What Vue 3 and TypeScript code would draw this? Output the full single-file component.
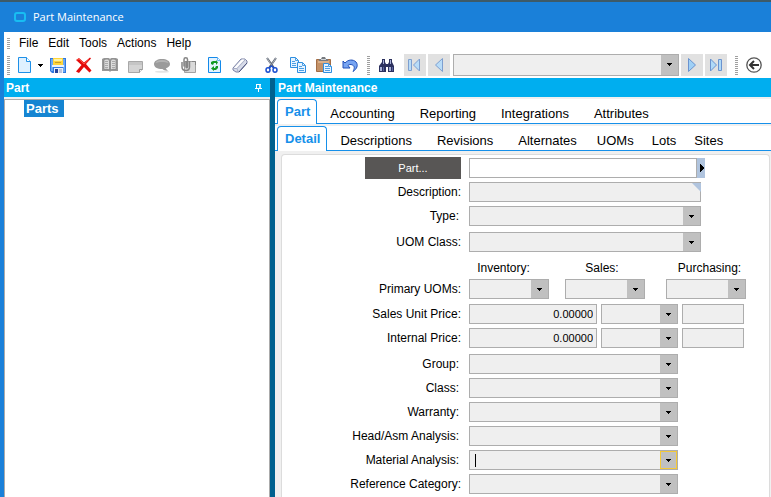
<script setup lang="ts">
import { ref } from 'vue'

interface Tab {
  name: string
  short?: boolean
}

interface Lookup {
  id: string
  label: string
  inset: boolean
  active?: boolean
}

const menus: string[] = ['File', 'Edit', 'Tools', 'Actions', 'Help']

const mainTabs: Tab[] = [
  { name: 'Part' },
  { name: 'Accounting' },
  { name: 'Reporting' },
  { name: 'Integrations' },
  { name: 'Attributes' },
]

const detailTabs: Tab[] = [
  { name: 'Detail' },
  { name: 'Descriptions' },
  { name: 'Revisions' },
  { name: 'Alternates' },
  { name: 'UOMs', short: true },
  { name: 'Lots', short: true },
  { name: 'Sites', short: true },
]

const uoms: string[] = ['Inventory', 'Sales', 'Purchasing']

const lookups: Lookup[] = [
  { id: 'group', label: 'Group:', inset: true },
  { id: 'class', label: 'Class:', inset: true },
  { id: 'warranty', label: 'Warranty:', inset: true },
  { id: 'head', label: 'Head/Asm Analysis:', inset: true },
  { id: 'material', label: 'Material Analysis:', inset: true, active: true },
  { id: 'reference', label: 'Reference Category:', inset: false },
]

const mainTab = ref('Part')
const detailTab = ref('Detail')
const prices = ref([
  { id: 'sales-price', label: 'Sales Unit Price:', value: '0.00000' },
  { id: 'internal-price', label: 'Internal Price:', value: '0.00000' },
])
</script>

<template>
  <div class="window">
    <header class="titlebar">
      <span class="app-icon"></span>
      <span>Part Maintenance</span>
    </header>

    <div class="client">
      <nav class="menubar">
        <span class="grip"></span>
        <button v-for="m in menus" :key="m" type="button">{{ m }}</button>
      </nav>

      <div class="toolbar">
        <span class="grip"></span>
        <div class="tools">
          <div class="split">
            <button type="button" aria-label="New">
              <svg viewBox="0 0 16 16"><path d="M2.5.5h8l4 4v11h-12z" fill="#dff1ff" stroke="#1e90e8" /><path d="M10.500.5v4h4" fill="#fff" stroke="#1e90e8" /></svg>
            </button>
            <button type="button" class="more" aria-label="New options">
              <svg viewBox="0 0 8 16"><path d="M2 7h5v1H6v1H5v1H4V9H3V8H2z" fill="#000" /></svg>
            </button>
          </div>
          <button type="button" aria-label="Save">
            <svg viewBox="0 0 16 16"><path d="M0 1h16v15H2l-2-2z" fill="#2f78e0" /><path d="M1 2h2v12H1zM13 2h2v13h-2z" fill="#6ba9f5" /><path d="M3 1h10v7H3z" fill="#ffd53a" /><path d="M4 2h8v2H4z" fill="#fff2a0" /><path d="M5 5h6v1H5z" fill="#c79e2c" /><path d="M2 8h12v2H2z" fill="#e8f2ff" /><path d="M4 11h9v5H4z" fill="#eef0f6" /><path d="M5 12h3v4H5z" fill="#24449c" /><path d="M9 12h3v4H9z" fill="#b9c4de" /></svg>
          </button>
          <button type="button" aria-label="Delete">
            <svg viewBox="0 0 16 16"><path d="M0 3l3-2 5 4.500 6-5 1 1-5 5.500 5.500 6.500-2 2L8 10l-5 6-3-1.500L5.500 8z" fill="#e30b0b" /><path d="M1 3l2-1 5 5 5-4.500" fill="none" stroke="#ff4b3e" /></svg>
          </button>
          <button type="button" aria-label="Book">
            <svg viewBox="0 0 16 16"><path d="M0 2l2-1h5l1 1 1-1h5l2 1v12H9l-1 1-1-1H0z" fill="#999" /><path d="M2 2.500q4-1.500 5.500 1V13Q5 11.500 2 12.500zM14 2.500q-4-1.500-5.500 1V13q2.500-1.500 5.500-.5z" fill="#dcdcdc" stroke="#808080" stroke-width=".7" /><path d="M3 4.500h3M3 6.500h3M3 8.500h3M3 10.500h3M10 4.500h3M10 6.500h3M10 8.500h3M10 10.500h3" stroke="#aaa" /></svg>
          </button>
          <button type="button" aria-label="Note">
            <svg viewBox="0 0 16 16"><path d="M.5 4.500h14v8l-3 3H.5z" fill="#d4d4d4" stroke="#a8a8a8" /><path d="M1 5h13v3H1z" fill="#c5c5c5" /><path d="M14.500 12.500h-3v3" fill="#f3f3f3" stroke="#999" /></svg>
          </button>
          <button type="button" aria-label="Comment">
            <svg viewBox="0 0 16 16"><ellipse cx="8" cy="14.800" rx="7" ry="1" fill="#e4e4e4" /><path d="M8 2c4.500 0 8 2 8 5 0 2-1.500 3.500-4 4.300.2 1 .8 1.700 2 2.300-2.500.2-4.300-.5-5.500-1.600C3 12 0 10 0 7s3.500-5 8-5z" fill="#9b9b9b" /><path d="M8 3c3.500 0 6 1 6.500 3-3-1.500-10-1.500-13 0C2 4 4.500 3 8 3z" fill="#b4b4b4" /></svg>
          </button>
          <button type="button" aria-label="Attachments">
            <svg viewBox="0 0 16 16"><path d="M4.500 4.500h11v11h-11z" fill="#dadada" stroke="#a2a2a2" /><path d="M12 4.500h3.500V8" fill="none" stroke="#858585" /><path d="M9.500 4v6c0 3-1.500 3.500-3.500 3.500s-4-.5-4-3.500V5M4 9.500V2.500C4 .2 7.500.2 7.500 2.500v7c0 1.500-1.500 1.500-1.500 0V4" fill="none" stroke="#858585" stroke-width="1.500" /></svg>
          </button>
          <button type="button" aria-label="Refresh">
            <svg viewBox="0 0 16 16"><path d="M2.500.5h9l3 3v12h-12z" fill="#e3f3ff" stroke="#1389ea" /><path d="M11.500.5v3h3" fill="#fff" stroke="#6ab5f2" /><path d="M5 7V5l2-1h3V3l2 2.500L10 8V6H8L7 8zM12 9v2l-2 2H8v1l-3-2.500L8 9v2h1l1-2z" fill="#129a25" /></svg>
          </button>
          <button type="button" aria-label="Clear">
            <svg viewBox="0 0 16 16"><path d="M1 11l8-9h4l2 2v2l-8 9H4l-3-2z" fill="#d8dce9" stroke="#7a81a4" stroke-linejoin="round" /><path d="M2 11l8-8.500h2.500L4.500 11z" fill="#fff" /><path d="M1.500 11.500h3.500L13.500 2.500M5 11.500l1 3" fill="none" stroke="#aab0c8" /><path d="M7 15l8-9" stroke="#4d547d" /></svg>
          </button>
        </div>

        <div class="tools edit-tools">
          <button type="button" aria-label="Cut">
            <svg viewBox="0 0 16 16"><path d="M3 1l7 10M12 1L5 11" stroke="#555c68" stroke-width="2" /><path d="M3 1l5 8M12 1L8 7" stroke="#c6cbd4" stroke-width=".8" /><ellipse cx="4" cy="13" rx="2" ry="2.200" fill="none" stroke="#1b4fd0" stroke-width="1.500" /><ellipse cx="11" cy="13" rx="2" ry="2.200" fill="none" stroke="#1b4fd0" stroke-width="1.500" /><path d="M5 11l2.500-2L10 11" fill="none" stroke="#1b4fd0" stroke-width="1.500" /></svg>
          </button>
          <button type="button" aria-label="Copy">
            <svg viewBox="0 0 16 16"><path d="M.5.5h5l3 3v7h-8z" fill="#e8f4ff" stroke="#2f8fe0" /><path d="M5.500.5v3h3M2 4.500h3M2 6.500h4M2 8.500h4" fill="none" stroke="#4c9fe5" /><path d="M7.500 5.500h5l3 3v7h-8z" fill="#e8f4ff" stroke="#2f8fe0" /><path d="M12.500 5.500v3h3M9 9.500h3M9 11.500h5M9 13.500h5" fill="none" stroke="#4c9fe5" /></svg>
          </button>
          <button type="button" aria-label="Paste">
            <svg viewBox="0 0 16 16"><path d="M.5 2.500h14v12H.5z" fill="#c39167" stroke="#a36d45" /><path d="M2 4h11v2H2z" fill="#dbb08a" /><path d="M3 2h2l1-2h3l1 2h2v2H3z" fill="#777b80" /><path d="M5 2.500h5" stroke="#d0d3d6" /><path d="M7.500 6.500h5l3 3v6h-8z" fill="#e8f4ff" stroke="#2f8fe0" /><path d="M12.500 6.500v3h3M9 9.500h3M9 11.500h5M9 13.500h5" fill="none" stroke="#4c9fe5" /></svg>
          </button>
          <button type="button" aria-label="Undo">
            <svg viewBox="0 0 16 16"><path d="M1 4l2 2c3-3.500 8-4 11-1 2.500 3 1 7-3 9.500 1.500-3 2-5-.5-6.500C8.500 7 7 7.500 6 8.500L8 11H1z" fill="#78a5f2" stroke="#2451b8" stroke-linejoin="round" /></svg>
          </button>
        </div>

        <span class="grip"></span>
        <button type="button" class="find" aria-label="Find">
          <svg viewBox="0 0 16 16"><path d="M3 2h3v3l1 2h2l1-2V2h3v3l2 4v6H9v-5H7v5H0V9l3-4z" fill="#2c315f" /><path d="M1 10h2v4H1zM10 10h2v4h-2zM4 3h1v4H4zM11 3h1v4h-1z" fill="#a7b0d8" /><path d="M4 10h1v4H4zM13 10h1v4h-1z" fill="#5964a0" /></svg>
        </button>

        <div class="record-nav">
          <button type="button" class="nav" aria-label="First">
            <svg viewBox="0 0 22 22"><path d="M4.500 5.500h3v11h-3zM15.500 5v12l-6-6z" fill="#b8dcf8" stroke="#7d9fd0" stroke-linejoin="round" /></svg>
          </button>
          <button type="button" class="nav" aria-label="Previous">
            <svg viewBox="0 0 22 22"><path d="M14.500 4.500v13l-7-6.500z" fill="#b8dcf8" stroke="#7d9fd0" stroke-linejoin="round" /></svg>
          </button>
          <span class="combo record"><select aria-label="Record"></select></span>
          <button type="button" class="nav" aria-label="Next">
            <svg viewBox="0 0 22 22"><path d="M7.500 4.500v13l7-6.500z" fill="#9fd0f6" stroke="#6a93cf" stroke-linejoin="round" /></svg>
          </button>
          <button type="button" class="nav" aria-label="Last">
            <svg viewBox="0 0 22 22"><path d="M5.500 5v12l6-6zM13.500 5.500h3v11h-3z" fill="#b0daf8" stroke="#6a93cf" stroke-linejoin="round" /></svg>
          </button>
        </div>

        <span class="grip"></span>
        <button type="button" class="back" aria-label="Back">
          <svg viewBox="0 0 16 16"><circle cx="8" cy="8" r="7.200" fill="#fff" stroke="#555" stroke-width="1.300" /><path d="M13 8H4M8 4L4 8l4 4" fill="none" stroke="#333" stroke-width="2" /></svg>
        </button>
      </div>

      <div class="workspace">
        <aside class="tree-pane">
          <h2 class="pane-title">
            <span>Part</span>
            <button type="button" class="pin" aria-label="Pin">
              <svg viewBox="0 0 8 10"><path d="M2.500 1v4.500M6 1v4.500M2 1.500h5M1 5.500h7M4.500 6v3" fill="none" stroke="#fff" /><path d="M5.500 1h1v4h-1z" fill="#fff" /></svg>
            </button>
          </h2>
          <ul class="tree">
            <li><a href="#parts">Parts</a></li>
          </ul>
        </aside>

        <main class="editor">
          <h2 class="pane-title">Part Maintenance</h2>
          <div class="tabs" role="tablist">
            <button v-for="t in mainTabs" :key="t.name" type="button" role="tab" :class="{ current: mainTab === t.name }" :aria-selected="mainTab === t.name" @click="mainTab = t.name">{{ t.name }}</button>
          </div>
          <div class="tabs" role="tablist">
            <button v-for="t in detailTabs" :key="t.name" type="button" role="tab" :class="{ current: detailTab === t.name, short: t.short }" :aria-selected="detailTab === t.name" @click="detailTab = t.name">{{ t.name }}</button>
          </div>

          <form class="sheet" @submit.prevent>
            <section>
              <div class="row">
                <button type="button" class="part-button">Part...</button>
                <div class="part-field">
                  <input class="box editable" type="text" aria-label="Part" />
                  <button type="button" class="flyout" aria-label="Open menu">
                    <svg viewBox="0 0 8 20"><path d="M3 6h1v1h1v1h1v1h1v2H6v1H5v1H4v1H3z" fill="#000" /></svg>
                  </button>
                </div>
              </div>
              <div class="row">
                <label for="description">Description:</label>
                <div class="wide noted"><input id="description" class="box" type="text" /></div>
              </div>
              <div class="row">
                <label class="inset" for="type">Type:</label>
                <span class="combo wide"><select id="type"></select></span>
              </div>
            </section>

            <section>
              <div class="row">
                <label for="uom-class">UOM Class:</label>
                <span class="combo wide"><select id="uom-class"></select></span>
              </div>
            </section>

            <section>
              <div class="uom-heads">
                <label v-for="u in uoms" :key="u" :for="'uom-' + u">{{ u }}:</label>
              </div>
              <div class="row">
                <span class="caption">Primary UOMs:</span>
                <div class="uom-fields">
                  <span v-for="u in uoms" :key="u" class="combo"><select :id="'uom-' + u"></select></span>
                </div>
              </div>
            </section>

            <section class="prices">
              <div v-for="p in prices" :key="p.id" class="row">
                <label :for="p.id">{{ p.label }}</label>
                <div class="price-fields">
                  <input :id="p.id" v-model="p.value" class="box amount" type="text" />
                  <span class="combo"><select :aria-label="p.label + ' per'"></select></span>
                  <input class="box" type="text" :aria-label="p.label + ' unit'" />
                </div>
              </div>
            </section>

            <section>
              <div v-for="l in lookups" :key="l.id" class="row">
                <label :class="{ inset: l.inset }" :for="l.id">{{ l.label }}</label>
                <span class="combo medium" :class="{ active: l.active }"><select :id="l.id"></select></span>
              </div>
            </section>
          </form>
        </main>
      </div>
    </div>
  </div>
</template>

<style>
body {
  background: #f0f0f0;
}
</style>

<style scoped>
*,
*::before,
*::after {
  box-sizing: border-box;
}

button {
  margin: 0;
  padding: 0;
  border: 0;
  background: none;
  color: inherit;
  font: inherit;
}

svg {
  display: block;
}

.window {
  display: flex;
  flex-direction: column;
  height: 100vh;
  overflow: hidden;
  background: #1a80d9;
  color: #000;
  font: 12px/16px "Liberation Sans", Arial, sans-serif;
}

.titlebar {
  display: flex;
  align-items: center;
  flex: none;
  gap: 7px;
  height: 32px;
  padding-left: 14px;
  border-top: 2px solid #3d5a68;
  color: #fff;
  font-family: "Open Sans", "Noto Sans", sans-serif;
  font-size: 11px;
}

.app-icon {
  width: 12px;
  height: 10px;
  border: 2px solid #18bdf2;
  border-radius: 3px;
}

.client {
  display: flex;
  flex: 1;
  flex-direction: column;
  min-height: 0;
  margin-left: 4px;
  background: #fff;
}

.grip {
  flex: none;
  width: 3px;
  height: 19px;
  background: repeating-linear-gradient(#a0a0a0 0 1px, #fff 1px 2px);
}

.menubar {
  display: flex;
  align-items: center;
  gap: 10px;
  height: 22px;
  padding-left: 3px;
}

.menubar .grip {
  height: 11px;
  margin-right: -1px;
}

.toolbar {
  display: flex;
  align-items: center;
  flex: none;
  height: 24px;
  padding: 0 9px 2px 3px;
}

.tools {
  display: flex;
  flex: none;
  gap: 10px;
  margin-left: 6px;
}

.edit-tools {
  margin: 0 9px 0 16px;
}

.tools button,
.find,
.back {
  flex: none;
  width: 16px;
  height: 16px;
}

.split {
  display: flex;
  gap: 4px;
  margin-right: -4px;
}

.tools .more {
  width: 8px;
}

.find {
  margin: 0 9px;
}

.back {
  margin-left: 8px;
}

.record-nav {
  display: flex;
  flex: 1;
  gap: 2px;
  margin-right: 8px;
}

.nav {
  flex: none;
  width: 22px;
  height: 22px;
  background: #e1e1e1;
}

.record {
  flex: 1;
  margin-left: 1px;
}

.workspace {
  display: flex;
  flex: 1;
  min-height: 0;
}

.tree-pane {
  display: flex;
  flex: 0 0 271px;
  flex-direction: column;
  border-right: 5px solid #00618f;
  background: #f0f0f0;
}

.pane-title {
  display: flex;
  align-items: center;
  justify-content: space-between;
  flex: none;
  height: 19px;
  margin: 0;
  padding: 0 8px 0 2px;
  background: #00aeef;
  color: #fff;
  font-size: 12px;
  font-weight: bold;
}

.pin {
  width: 8px;
  height: 10px;
}

.tree {
  flex: 1;
  margin: 2px 0 0;
  padding: 0 0 0 19px;
  border: 1px solid #ababab;
  border-bottom: 0;
  background: #fff;
  list-style: none;
}

.tree a {
  display: inline-block;
  padding: 1px 5px 0 2px;
  background: #1585d2;
  color: #fff;
  font-size: 13px;
  font-weight: bold;
  text-decoration: none;
}

.editor {
  display: flex;
  flex: 1;
  flex-direction: column;
  min-width: 0;
  background: #f0f0f0;
}

.editor .pane-title {
  padding-left: 3px;
}

.tabs {
  display: flex;
  flex: none;
  height: 25px;
  margin-top: 2px;
  padding-left: 2px;
  background: linear-gradient(#1690ea 0 0) bottom / 100% 1px no-repeat #fff;
  font-size: 13px;
}

.tabs button {
  padding: 4px 12px 0 13px;
}

.tabs .short {
  padding: 4px 10px 0 8px;
}

.tabs .current {
  padding: 0 6px 0 7px;
  border: 1px solid #1690ea;
  border-bottom: 0;
  border-radius: 4px 4px 0 0;
  background: #fff;
  color: #1690ea;
  font-weight: bold;
}

.sheet {
  flex: 1;
  margin: 3px 1px 0 6px;
  padding-top: 3px;
  border: 1px solid #dcdcdc;
  border-bottom: 0;
  border-radius: 4px 4px 0 0;
  background: #fff;
}

section {
  display: flex;
  flex-direction: column;
  gap: 4px;
  margin-bottom: 6px;
}

.row {
  display: grid;
  grid-template-rows: 20px;
  grid-template-columns: 179px 1fr;
  column-gap: 8px;
  align-items: center;
}

.row > label,
.caption {
  text-align: right;
}

.row > .inset {
  padding-right: 2px;
}

.part-button {
  justify-self: end;
  width: 96px;
  height: 22px;
  background: #585655;
  color: #fff;
  font-size: 11px;
}

.box {
  width: 100%;
  height: 20px;
  margin: 0;
  padding: 0 3px;
  border: 1px solid #adadad;
  border-radius: 0;
  outline: 0;
  background: #efefef;
  color: #000;
  font: inherit;
}

.editable {
  background: #fff;
}

.part-field {
  display: grid;
  grid-template-columns: 228px 8px;
}

.flyout {
  background: #b0c4de;
}

.wide {
  width: 232px;
}

.medium {
  width: 209px;
}

.noted {
  position: relative;
}

.noted::after {
  position: absolute;
  top: 1px;
  right: 0;
  width: 9px;
  height: 9px;
  background: #b0c4de;
  clip-path: polygon(0 0, 100% 0, 100% 100%);
  content: "";
}

.combo {
  position: relative;
  display: block;
  height: 20px;
}

.record.combo {
  height: 22px;
}

.combo select {
  display: block;
  width: 100%;
  height: 100%;
  margin: 0;
  padding: 0 20px 0 4px;
  border: 1px solid #adadad;
  border-radius: 0;
  outline: 0;
  appearance: none;
  background:
    linear-gradient(#000 0 0) right 6px top 8px / 5px 1px,
    linear-gradient(#000 0 0) right 7px top 9px / 3px 1px,
    linear-gradient(#000 0 0) right 8px top 10px / 1px 1px,
    linear-gradient(#c0c0c0 0 0) right / 17px 100%,
    #efefef;
  background-repeat: no-repeat;
  font: inherit;
}

.active::before {
  position: absolute;
  top: 4px;
  left: 6px;
  width: 1px;
  height: 13px;
  background: #000;
  content: "";
}

.active::after {
  position: absolute;
  top: 1px;
  right: 1px;
  width: 17px;
  height: 18px;
  border: 1px solid #f5c938;
  content: "";
  pointer-events: none;
}

.uom-heads {
  display: grid;
  grid-template-columns: 69px 128px 87px;
  height: 17px;
  margin-left: 187px;
  padding-top: 2px;
  text-align: center;
}

.uom-fields {
  display: grid;
  grid-template-columns: 80px 85px 80px;
  column-gap: 16px;
}

.uom-fields .combo {
  width: 80px;
}

.price-fields {
  display: grid;
  grid-template-columns: 128px 77px 62px;
  column-gap: 4px;
}

.amount {
  font-size: 11px;
  text-align: right;
}

.prices {
  margin-top: -1px;
}
</style>
